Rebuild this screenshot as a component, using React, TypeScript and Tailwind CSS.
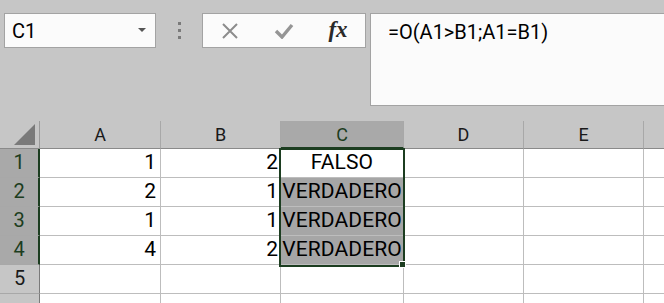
import React from 'react';

const cols = [
  { key: 'A', w: 'w-[121px]' },
  { key: 'B', w: 'w-[120px]' },
  { key: 'C', w: 'w-[123px]' },
  { key: 'D', w: 'w-[120px]' },
  { key: 'E', w: 'w-[120px]' },
];

const rows: { a: string; b: string; c: string }[] = [
  { a: '1', b: '2', c: 'FALSO' },
  { a: '2', b: '1', c: 'VERDADERO' },
  { a: '1', b: '1', c: 'VERDADERO' },
  { a: '4', b: '2', c: 'VERDADERO' },
  { a: '', b: '', c: '' },
  { a: '', b: '', c: '' },
];

const font = { fontFamily: 'Roboto, "Liberation Sans", sans-serif' };

export default function App() {
  return (
    <div className="w-[664px] h-[303px] overflow-hidden bg-[#c6c6c6] text-black" style={font}>
      {/* formula bar */}
      <div className="flex items-start h-[121px] pt-[13px] pl-[4px]">
        <div className="w-[152px] h-[35px] bg-[#fbfbfb] border border-[#a3a3a3] flex items-center justify-between pl-[7px] pr-[9px]">
          <span className="text-[20px] leading-none mt-[1px]">C1</span>
          <svg width="8" height="5" viewBox="0 0 8 5">
            <path d="M0 0 L8 0 L4 4 Z" fill="#555" />
          </svg>
        </div>
        <div className="w-[46px] h-[35px] flex flex-col items-center justify-center gap-[4px]">
          <div className="w-[3px] h-[3px] bg-[#7a7a7a]" />
          <div className="w-[3px] h-[3px] bg-[#7a7a7a]" />
          <div className="w-[3px] h-[3px] bg-[#7a7a7a]" />
        </div>
        <div className="w-[164px] h-[35px] bg-[#fbfbfb] border border-[#a3a3a3] flex items-center">
          <div className="w-[54px] flex justify-center">
            <svg width="18" height="16" viewBox="0 0 18 16">
              <path d="M2 1 L16 15 M16 1 L2 15" stroke="#8c8c8c" strokeWidth="2" fill="none" />
            </svg>
          </div>
          <div className="w-[54px] flex justify-center">
            <svg width="20" height="16" viewBox="0 0 20 16">
              <path d="M2 8 L8 14 L18 2" stroke="#959595" strokeWidth="3.4" fill="none" />
            </svg>
          </div>
          <div className="w-[54px] flex justify-center">
            <span
              className="italic font-bold text-[23px] leading-none text-[#2a2a2a] -mt-[3px]"
              style={{ fontFamily: '"Liberation Serif", serif' }}
            >
              fx
            </span>
          </div>
        </div>
        <div className="ml-[4px] flex-1 h-[93px] bg-[#fbfbfb] border border-[#a3a3a3] border-r-0 pl-[17px] pt-[8px]">
          <span className="text-[20px] leading-none">=O(A1&gt;B1;A1=B1)</span>
        </div>
      </div>

      {/* sheet */}
      <div className="relative">
        {/* column headers */}
        <div className="flex h-[28px]">
          <div className="w-[40px] h-full border-r border-[#9a9a9a] border-b border-b-[#8a8a8a] flex items-end justify-end pr-[4px] pb-[3px]">
            <svg width="21" height="21" viewBox="0 0 21 21">
              <path d="M21 0 L21 21 L0 21 Z" fill="#7a7a7a" />
            </svg>
          </div>
          {cols.map((c) => (
            <div
              key={c.key}
              className={`${c.w} h-full border-r border-[#a8a8a8] flex items-center justify-center text-[18px] leading-none ${
                c.key === 'C'
                  ? 'bg-[#a9a9a9] border-b-2 border-b-[#1c3d20] text-[#1c3d20]'
                  : 'border-b border-b-[#8a8a8a] text-[#1a1a1a]'
              }`}
            >
              <span className="mt-[1px]">{c.key}</span>
            </div>
          ))}
          <div className="flex-1 h-full border-b border-b-[#8a8a8a]" />
        </div>

        {/* rows */}
        {rows.map((r, i) => {
          const sel = i < 4;
          return (
            <div key={i} className="flex h-[29px]">
              <div
                className={`w-[40px] h-full flex items-end justify-center pb-[5px] text-[20px] leading-none border-b border-b-[#a8a8a8] ${
                  sel
                    ? 'bg-[#a9a9a9] border-r-2 border-r-[#1c3d20] text-[#1c3d20]'
                    : 'bg-[#c6c6c6] border-r border-r-[#7a7a7a] text-[#1a1a1a]'
                }`}
              >
                {i < 5 ? i + 1 : ''}
              </div>
              <div className="w-[121px] h-full bg-white border-r border-b border-[#bdbdbd] flex items-end justify-end pr-[4px] pb-[4px] text-[21px] leading-none">
                {r.a}
              </div>
              <div className="w-[120px] h-full bg-white border-r border-b border-[#bdbdbd] flex items-end justify-end pr-[2px] pb-[4px] text-[21px] leading-none">
                {r.b}
              </div>
              <div
                className={`w-[123px] h-full border-r border-b border-[#bdbdbd] flex items-end justify-center pb-[4px] text-[21px] leading-none tracking-[0.1px] ${
                  i >= 1 && i <= 3 ? 'bg-[#a6a6a6]' : 'bg-white'
                }`}
              >
                {r.c}
              </div>
              <div className="w-[120px] h-full bg-white border-r border-b border-[#bdbdbd]" />
              <div className="w-[120px] h-full bg-white border-r border-b border-[#bdbdbd]" />
              <div className="flex-1 h-full bg-white border-b border-[#bdbdbd]" />
            </div>
          );
        })}

        {/* selection outline */}
        <div className="absolute left-[279px] top-[27px] w-[126px] h-[119px] border-2 border-[#1c3d20] pointer-events-none" />
        <div className="absolute left-[399px] top-[140px] w-[7px] h-[7px] bg-[#1c3d20] border border-white pointer-events-none" />
      </div>
    </div>
  );
}
